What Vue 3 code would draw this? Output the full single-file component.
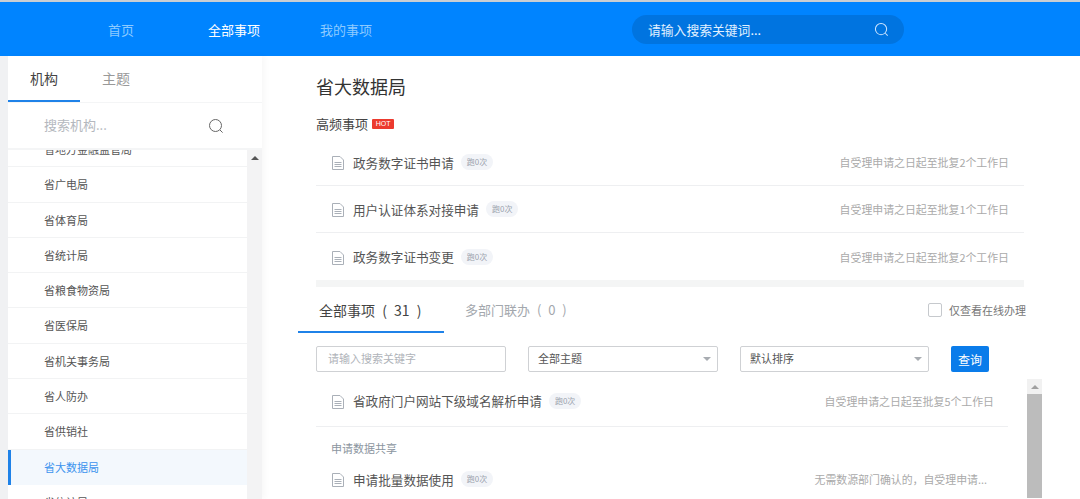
<template>
  <div class="page">
    <header class="top-bar">
      <nav class="nav">
        <a v-for="n in navs" :key="n.label" class="nav-item" :class="{ on: n.on }">{{ n.label }}</a>
      </nav>
      <div class="top-search">
        <span class="top-search-text">请输入搜索关键词...</span>
        <svg class="ico" width="15" height="15" viewBox="0 0 16 16" fill="none" stroke="#cfe6ff" stroke-width="1.1">
          <circle cx="7.5" cy="7.5" r="6" />
          <path d="M12 12l2.6 2.6" />
        </svg>
      </div>
    </header>

    <div class="body">
      <aside class="side">
        <div class="side-tabs">
          <div class="side-tab on">机构</div>
          <div class="side-tab">主题</div>
        </div>
        <div class="side-search">
          <span>搜索机构...</span>
          <svg width="16" height="16" viewBox="0 0 16 16" fill="none" stroke="#666" stroke-width="1">
            <circle cx="7.5" cy="7.5" r="6" />
            <path d="M12 12l2.6 2.6" />
          </svg>
        </div>
        <div class="side-list-wrap">
          <ul class="side-list">
            <li v-for="o in orgs" :key="o" :class="{ on: o === '省大数据局' }">{{ o }}</li>
          </ul>
          <div class="side-scroll"><i class="arrow-up"></i></div>
        </div>
      </aside>

      <main class="main">
        <div class="head-block">
          <h1 class="title">省大数据局</h1>
          <div class="hot-head">高频事项 <span class="hot">HOT</span></div>
          <div v-for="(h, i) in hots" :key="h.name" class="row hot-row" :class="{ last: i === hots.length - 1 }">
            <svg class="doc" width="12" height="14" viewBox="0 0 12 14" fill="none" stroke="#aab0b8">
              <path d="M.5.5h7.5l3.5 3.5v9.500h-11zM2.500 6.500h7M2.500 8.500h7M2.500 10.500h7" />
            </svg>
            <span class="row-name">{{ h.name }}</span>
            <span class="pill">跑0次</span>
            <span class="row-note">{{ h.note }}</span>
          </div>
          <div class="band"></div>
        </div>

        <div class="tabs">
          <div class="tab on">全部事项 ( 31 )</div>
          <div class="tab">多部门联办 ( 0 )</div>
          <label class="online"><i class="box"></i>仅查看在线办理</label>
        </div>

        <div class="filters">
          <div class="field input">请输入搜索关键字</div>
          <div class="field select">全部主题<i class="caret"></i></div>
          <div class="field select narrow">默认排序<i class="caret"></i></div>
          <button class="query">查询</button>
        </div>

        <div class="list-wrap">
          <div class="list">
            <div class="row list-row first">
              <svg class="doc" width="12" height="14" viewBox="0 0 12 14" fill="none" stroke="#aab0b8">
                <path d="M.5.5h7.5l3.5 3.500v9.500h-11zM2.500 6.500h7M2.500 8.500h7M2.500 10.500h7" />
              </svg>
              <span class="row-name">省政府门户网站下级域名解析申请</span>
              <span class="pill">跑0次</span>
              <span class="row-note">自受理申请之日起至批复5个工作日</span>
            </div>
            <div class="group">申请数据共享</div>
            <div class="row list-row">
              <svg class="doc" width="12" height="14" viewBox="0 0 12 14" fill="none" stroke="#aab0b8">
                <path d="M.5.5h7.5l3.5 3.500v9.500h-11zM2.500 6.500h7M2.500 8.500h7M2.500 10.500h7" />
              </svg>
              <span class="row-name">申请批量数据使用</span>
              <span class="pill">跑0次</span>
              <span class="row-note short">无需数源部门确认的，自受理申请...</span>
            </div>
          </div>
          <div class="list-scroll">
            <i class="arrow-up"></i>
            <div class="thumb"></div>
          </div>
        </div>
      </main>
    </div>
  </div>
</template>

<script setup>
const navs = [
  { label: '首页' },
  { label: '全部事项', on: true },
  { label: '我的事项' }
]
const orgs = ['省地方金融监管局', '省广电局', '省体育局', '省统计局', '省粮食物资局', '省医保局', '省机关事务局', '省人防办', '省供销社', '省大数据局', '省信访局']
const hots = [
  { name: '政务数字证书申请', note: '自受理申请之日起至批复2个工作日' },
  { name: '用户认证体系对接申请', note: '自受理申请之日起至批复1个工作日' },
  { name: '政务数字证书变更', note: '自受理申请之日起至批复2个工作日' }
]
</script>

<style>
html, body { margin: 0; background: #fff; }
</style>

<style scoped>
.page {
  width: 1080px;
  height: 499px;
  overflow: hidden;
  font-family: "Noto Sans CJK SC", "Liberation Sans", sans-serif;
  color: #444;
  background: #fff;
}
.top-bar {
  height: 54px;
  border-top: 2px solid #c9ced3;
  background: #0084ff;
  display: flex;
  align-items: center;
  padding-left: 108px;
}
.nav {
  display: grid;
  grid-template-columns: 100px 112px auto;
  width: 524px;
  flex: none;
}
.nav-item { font-size: 13px; color: #8ccaff; }
.nav-item.on { color: #fff; }
.top-search {
  width: 272px;
  height: 29px;
  border-radius: 15px;
  background: #0074e0;
  display: flex;
  align-items: center;
  justify-content: space-between;
  padding: 0 15px 0 16px;
  box-sizing: border-box;
  font-size: 12.800px;
  color: #e2f1ff;
}
.body { display: flex; height: 443px; }
.side {
  margin-left: 8px;
  width: 254px;
  flex: none;
  box-shadow: -8px 0 0 #f0f1f3, 3px 0 6px rgba(0, 0, 0, .03);
  display: flex;
  flex-direction: column;
}
.side-tabs { display: flex; height: 46px; }
.side-tab {
  width: 72px;
  text-align: center;
  font-size: 14px;
  line-height: 44px;
  color: #999;
  height: 44px;
}
.side-tab.on { color: #444; border-bottom: 2px solid #1f82e8; }
.side-search {
  height: 48px;
  display: flex;
  align-items: center;
  justify-content: space-between;
  padding: 0 38px 3px 36px;
  font-size: 13px;
  color: #b4b8be;
  border-bottom: 2px solid #f4f5f6;
  border-top: 1px solid #f4f5f6;
  box-sizing: border-box;
}
.side-search svg { margin-top: 4px; }
.side-list-wrap { flex: 1; display: flex; min-height: 0; overflow: hidden; }
.side-list {
  list-style: none;
  margin: -18px 0 0;
  padding: 0;
  width: 239px;
  flex: none;
}
.side-list li {
  height: 35.3px;
  line-height: 34px;
  box-sizing: border-box;
  padding-left: 36px;
  font-size: 11px;
  color: #555;
  border-bottom: 1px solid #f2f3f4;
}
.side-list li.on {
  color: #3b93ee;
  background: #f3f8fd;
  box-shadow: inset 3px 0 0 #1f82e8;
  border-bottom: 0;
}
.side-scroll {
  flex: 1;
  background: #f3f3f4;
  display: flex;
  justify-content: center;
  padding-top: 6px;
  box-sizing: border-box;
}
.arrow-up {
  display: block;
  width: 0;
  height: 0;
  border: 4px solid transparent;
  border-top: 0;
  border-bottom: 4px solid #555;
}
.main { flex: 1; padding-left: 54px; min-width: 0; }
.head-block { width: 708px; }
.title {
  margin: 0;
  padding-top: 17px;
  font-size: 18px;
  font-weight: 400;
  line-height: 26px;
  color: #333;
}
.hot-head {
  display: flex;
  align-items: center;
  gap: 4px;
  margin-top: 16px;
  font-size: 13px;
  line-height: 18px;
  color: #444;
}
.hot {
  background: #ec3a2e;
  color: #fff;
  font-family: "Liberation Sans", sans-serif;
  font-size: 7px;
  line-height: 10px;
  width: 22px;
  text-align: center;
  border-radius: 1px;
}
.row { display: flex; align-items: center; }
.hot-row {
  height: 47px;
  border-bottom: 1px solid #eeeff1;
  padding: 0 15px 0 16px;
  box-sizing: border-box;
}
.hot-row.last { border-bottom: 0; }
.hot-head + .hot-row { margin-top: 6px; }
.doc { flex: none; margin-top: 2px; }
.row-name { margin-left: 9px; font-size: 12.600px; color: #555; }
.pill {
  margin-left: 7px;
  height: 16px;
  line-height: 16px;
  padding: 0 6px;
  border-radius: 8px;
  background: #f2f4f8;
  color: #9aa2ad;
  font-size: 8px;
}
.row-note { margin-left: auto; font-size: 10.900px; color: #aaa; }
.band { height: 7px; background: #f4f5f5; }
.tabs {
  display: flex;
  align-items: flex-start;
  width: 728px;
  height: 46px;
  margin-left: -18px;
}
.tab {
  width: 146px;
  padding-left: 21px;
  box-sizing: border-box;
  font-size: 14px;
  word-spacing: 4px;
  line-height: 46px;
  color: #a3a7ad;
  height: 46px;
  white-space: nowrap;
}
.tab.on { color: #444; border-bottom: 2px solid #1f82e8; }
.tab + .tab { width: 130px; font-size: 13px; }
.online {
  margin-left: auto;
  display: flex;
  align-items: center;
  gap: 7px;
  height: 46px;
  font-size: 11px;
  color: #777;
  white-space: nowrap;
}
.box {
  width: 12px;
  height: 12px;
  border: 1px solid #c6c9cd;
  border-radius: 2px;
}
.filters {
  display: flex;
  align-items: center;
  gap: 22px;
  margin-top: 13px;
}
.field {
  width: 190px;
  height: 26px;
  line-height: 22px;
  box-sizing: border-box;
  border: 1px solid #cfd1d4;
  border-radius: 2px;
  font-size: 11px;
  padding-left: 9px;
  color: #555;
  position: relative;
}
.field.narrow { width: 189px; }
.field.input { padding-left: 11px; color: #b0b4ba; }
.caret {
  position: absolute;
  right: 6px;
  top: 10px;
  width: 0;
  height: 0;
  border: 4px solid transparent;
  border-bottom: 0;
  border-top: 4px solid #a8acb1;
}
.query {
  width: 38px;
  height: 26px;
  padding: 0;
  border: 0;
  border-radius: 2px;
  background: #0a7cea;
  color: #fff;
  font: inherit;
  font-size: 12px;
}
.list-wrap { display: flex; margin-top: 7px; height: 119px; }
.list { width: 692px; flex: none; }
.list-row {
  height: 48px;
  padding: 0 14px 4px 16px;
  box-sizing: border-box;
}
.list-row.first { border-bottom: 1px solid #eeeff1; }
.group {
  font-size: 11px;
  color: #8b95a0;
  line-height: 16px;
  padding: 13px 0 0 15px;
}
.group + .list-row { height: 46px; padding: 0 21px 0 16px; }
.list-scroll {
  width: 15px;
  margin-left: 19px;
  background: #f1f1f1;
  display: flex;
  flex-direction: column;
  align-items: center;
}
.list-scroll .arrow-up { margin-top: 6px; border-bottom-color: #a0a0a0; }
.thumb { width: 100%; flex: 1; margin-top: 5px; background: #bcbcbc; }
</style>
